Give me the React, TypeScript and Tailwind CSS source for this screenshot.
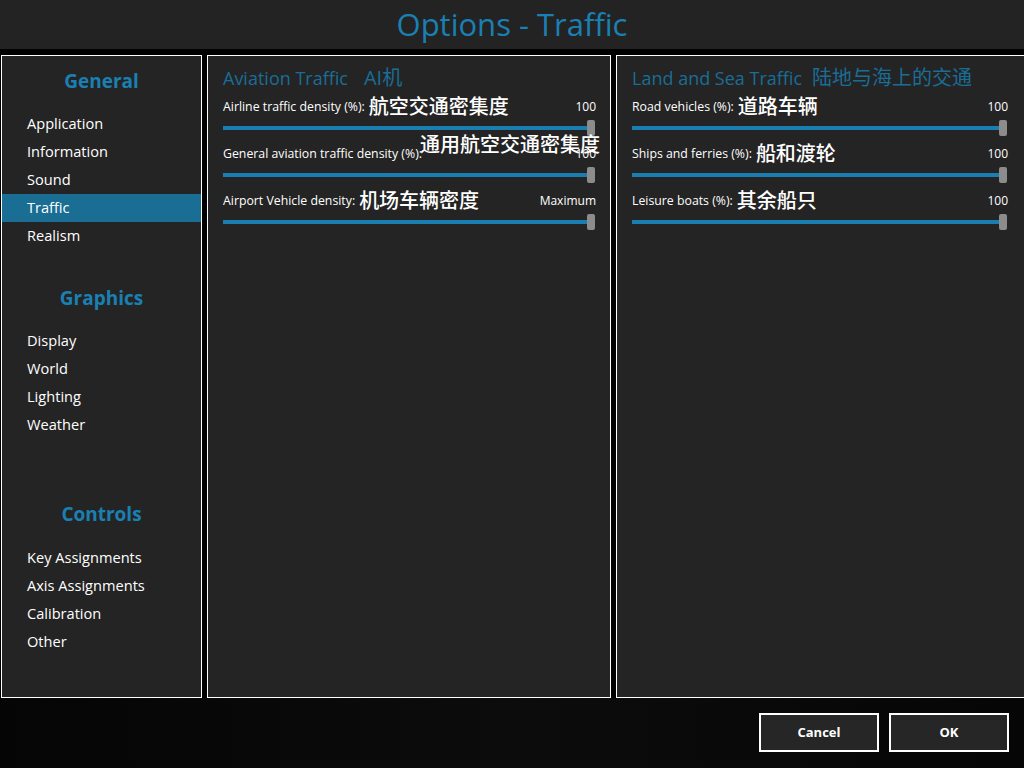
import React from "react";

const FONT = "font-['Open_Sans','Noto_Sans_CJK_SC',sans-serif]";

type NavGroup = { title: string; items: string[] };

const groups: NavGroup[] = [
  { title: "General", items: ["Application", "Information", "Sound", "Traffic", "Realism"] },
  { title: "Graphics", items: ["Display", "World", "Lighting", "Weather"] },
  { title: "Controls", items: ["Key Assignments", "Axis Assignments", "Calibration", "Other"] },
];

// spacing above each group heading and its list, tuned to the reference
const groupGap = ["mt-[11px]", "mt-[34px]", "mt-[61px]"];
const listGap = ["mt-[15px]", "mt-[15px]", "mt-[16px]"];

function Slider() {
  return (
    <div className="relative flex h-[16px] items-center">
      <div className="h-[4px] flex-1 bg-[#1a7fb0]" />
      <div className="ml-[-5px] h-[16px] w-[8px] rounded-[2px] bg-[#8c8c8c]" />
    </div>
  );
}

type Row = { label: string; note?: string; value: string; raised?: boolean };

function SliderRow({ label, note, value, raised }: Row) {
  return (
    <div className="mb-[8px]">
      <div className="-mr-[1px] flex h-[20px] items-center justify-between">
        <span className="flex items-center whitespace-nowrap text-[12.3px] text-white">
          {label}
          {note && raised ? (
            // annotation floats above the row, over the value
            <span className="relative h-[20px] w-0">
              <span className="absolute -left-[2px] -top-[9px] z-10 whitespace-nowrap text-[20px] leading-none font-medium">
                {note}
              </span>
            </span>
          ) : null}
          {note && !raised ? (
            <span className="ml-[4px] text-[20px] leading-none font-medium">{note}</span>
          ) : null}
        </span>
        <span className="text-[12px] text-white">{value}</span>
      </div>
      <div className="mt-[3px]">
        <Slider />
      </div>
    </div>
  );
}

function Panel({
  title,
  note,
  rows,
  className,
  noteGap,
}: {
  title: string;
  note: string;
  rows: Row[];
  className: string;
  noteGap: string;
}) {
  return (
    <section className={`border border-white bg-[#242424] ${className}`}>
      <h2 className="mt-[10px] flex h-[24px] items-center whitespace-nowrap text-[18px] text-[#1a6d96]">
        {title}
        <span className={`${noteGap} text-[20px]`}>{note}</span>
      </h2>
      <div className="mt-[7px]">
        {rows.map((r) => (
          <SliderRow key={r.label} {...r} />
        ))}
      </div>
    </section>
  );
}

export default function App() {
  return (
    <div className={`flex h-[768px] w-[1024px] flex-col overflow-hidden bg-black ${FONT}`}>
      <header className="flex h-[49px] shrink-0 items-center justify-center bg-[#232323]">
        <h1 className="text-[31px] leading-none text-[#1a80b3]">Options - Traffic</h1>
      </header>

      <div className="mt-[6px] flex h-[643px] shrink-0 gap-[5px] pl-[1px]">
        <nav className="w-[201px] shrink-0 border border-white bg-[#242424]">
          {groups.map((g, gi) => (
            <div key={g.title} className={groupGap[gi]}>
              <h3 className="flex h-[28px] items-center justify-center text-[19px] font-bold text-[#1a80b3]">
                {g.title}
              </h3>
              <ul className={listGap[gi]}>
                {g.items.map((it) => (
                  <li
                    key={it}
                    className={
                      it === "Traffic"
                        ? "flex h-[28px] items-center bg-[#1a6e93] pl-[25px] text-[14.6px] text-white"
                        : "flex h-[28px] items-center pl-[25px] text-[14.6px] text-white"
                    }
                  >
                    {it}
                  </li>
                ))}
              </ul>
            </div>
          ))}
        </nav>

        <Panel
          title="Aviation Traffic"
          note="AI机"
          noteGap="ml-[16px]"
          className="w-[404px] shrink-0 px-[15px]"
          rows={[
            { label: "Airline traffic density (%):", note: "航空交通密集度", value: "100" },
            {
              label: "General aviation traffic density (%):",
              note: "通用航空交通密集度",
              value: "100",
              raised: true,
            },
            { label: "Airport Vehicle density:", note: "机场车辆密度", value: "Maximum" },
          ]}
        />

        <Panel
          title="Land and Sea Traffic"
          note="陆地与海上的交通"
          noteGap="ml-[10px]"
          className="w-[420px] shrink-0 pl-[15px] pr-[28px]"
          rows={[
            { label: "Road vehicles (%):", note: "道路车辆", value: "100" },
            { label: "Ships and ferries (%):", note: "船和渡轮", value: "100" },
            { label: "Leisure boats (%):", note: "其余船只", value: "100" },
          ]}
        />
      </div>

      <footer className="flex flex-1 items-start justify-end gap-[10px] bg-gradient-to-r from-[#050505] via-[#0c0c0c] to-[#060606] pr-[15px] pt-[15px]">
        <button className="h-[39px] w-[120px] border-2 border-white bg-[#262626] text-[13px] font-bold text-white">
          Cancel
        </button>
        <button className="h-[39px] w-[120px] border-2 border-white bg-[#262626] text-[13px] font-bold text-white">
          OK
        </button>
      </footer>
    </div>
  );
}
